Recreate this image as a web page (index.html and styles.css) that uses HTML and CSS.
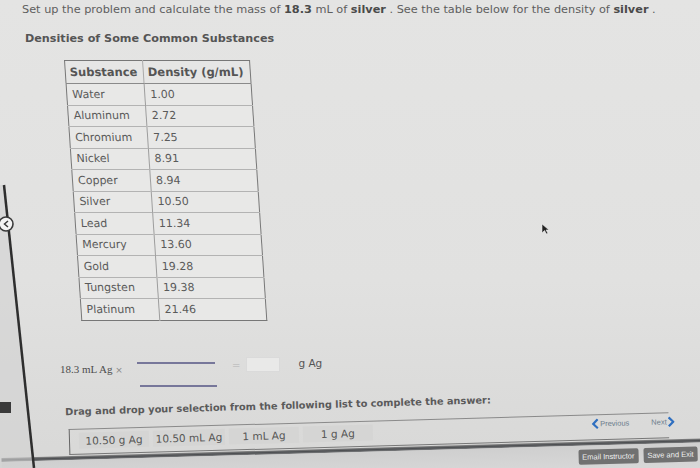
FILE: index.html
```html
<!DOCTYPE html>
<html>
<head>
<meta charset="utf-8">
<link rel="stylesheet" href="styles.css">
</head>
<body>
<div class="page">
  <p class="question">Set up the problem and calculate the mass of <b>18.3</b> mL of <b>silver</b> . See the table below for the density of <b>silver</b> .</p>
  <h2 class="heading">Densities of Some Common Substances</h2>
  <div class="table-wrap">
    <table class="density">
      <thead><tr><th class="c1">Substance</th><th class="c2">Density (g/mL)</th></tr></thead>
      <tbody>
        <tr><td>Water</td><td>1.00</td></tr>
        <tr><td>Aluminum</td><td>2.72</td></tr>
        <tr><td>Chromium</td><td>7.25</td></tr>
        <tr><td>Nickel</td><td>8.91</td></tr>
        <tr><td>Copper</td><td>8.94</td></tr>
        <tr><td>Silver</td><td>10.50</td></tr>
        <tr><td>Lead</td><td>11.34</td></tr>
        <tr><td>Mercury</td><td>13.60</td></tr>
        <tr><td>Gold</td><td>19.28</td></tr>
        <tr><td>Tungsten</td><td>19.38</td></tr>
        <tr><td>Platinum</td><td>21.46</td></tr>
      </tbody>
    </table>
  </div>

  <div class="equation">
    <span class="eq-label">18.3 mL Ag <span class="times">×</span></span>
    <div class="fraction">
      <div class="slot top"></div>
      <div class="slot bottom"></div>
    </div>
    <span class="equals">=</span>
    <span class="answer-box"></span>
    <span class="unit">g Ag</span>
  </div>

  <div class="lower">
    <div class="drag-title">Drag and drop your selection from the following list to complete the answer:</div>
    <div class="drag-box">
      <div class="tiles">
        <span class="tile t1">10.50 g Ag</span>
        <span class="tile t2">10.50 mL Ag</span>
        <span class="tile t3">1 mL Ag</span>
        <span class="tile t4">1 g Ag</span>
      </div>
      <div class="nav">
        <span class="prev"><svg class="chev" width="7" height="11" viewBox="0 0 7 11"><path d="M6 1 L1.5 5.5 L6 10" fill="none" stroke="#2f6fc0" stroke-width="2.2"/></svg>Previous</span>
        <span class="next">Next<svg class="chev" width="7" height="11" viewBox="0 0 7 11"><path d="M1 1 L5.5 5.5 L1 10" fill="none" stroke="#2f6fc0" stroke-width="2.2"/></svg></span>
      </div>
    </div>
    <div class="band"></div>
    <div class="footer">
      <span class="btn">Email Instructor</span>
      <span class="btn">Save and Exit</span>
    </div>
  </div>
</div>

<svg class="edge" width="40" height="468" viewBox="0 0 40 468">
  <path d="M0 185 L4 185 L34 468 L0 468 Z" fill="#d2d2d2" opacity="0.6"/>
  <line x1="4" y1="185" x2="34" y2="468" stroke="#2e2e2e" stroke-width="2.5"/>
  <rect x="0" y="402" width="11" height="11" fill="#3a3a3a"/>
  <circle cx="6" cy="224" r="7" fill="#f4f4f4" stroke="#3a3a3a" stroke-width="1.6"/>
  <path d="M8 221 L4.5 224 L8 227" fill="none" stroke="#3a3a3a" stroke-width="1.5"/>
</svg>
<svg class="cursor" width="9" height="12" viewBox="0 0 9 12">
  <path d="M1 1 L1 10 L3.5 7.5 L5.5 11 L7 10.3 L5 7 L8 7 Z" fill="#222" stroke="#eee" stroke-width="0.6"/>
</svg>
</body>
</html>
```
FILE: styles.css
```css
html, body {
  margin: 0;
  padding: 0;
}
body {
  width: 700px;
  height: 468px;
  overflow: hidden;
  position: relative;
  background: linear-gradient(to bottom, #e4e4e3 0%, #e1e1e0 60%, #d8d8d7 100%);
  font-family: "DejaVu Sans", Verdana, sans-serif;
  color: #5d5d5d;
}
.page {
  padding-top: 2px;
}
.question {
  margin: 0 0 0 22px;
  font-size: 11.3px;
  line-height: 16px;
  white-space: nowrap;
  color: #5e5e5e;
}
.question b {
  color: #4a4a4a;
}
.heading {
  margin: 13px 0 0 25px;
  font-size: 11.2px;
  line-height: 16px;
  font-weight: bold;
  color: #555;
}
.table-wrap {
  margin: 13px 0 0 64px;
  transform: skewX(3.8deg);
  transform-origin: top left;
  width: 188px;
}
.density {
  border-collapse: collapse;
  border: 1.5px solid #777;
  font-size: 11px;
  color: #5a5a5a;
  background: #e8e8e7;
}
.density th {
  height: 22px;
  text-align: left;
  font-weight: bold;
  font-size: 11.5px;
  color: #555;
  padding: 0 4px;
  border-bottom: 1.5px solid #8a8a8a;
  background: #e6e6e5;
}
.density th.c1 { width: 69px; border-right: 1px solid #aaa; }
.density th.c2 { width: 98px; }
.density td {
  height: 20.5px;
  padding: 0 4px 0 5px;
  border-top: 1px solid #b3b3b3;
}
.density td:first-child {
  border-right: 1px solid #9d9d9d;
}
.equation {
  display: flex;
  align-items: center;
  margin: 30px 0 0 60px;
  height: 36px;
}
.eq-label {
  font-family: "Liberation Serif", "Times New Roman", serif;
  font-size: 11px;
  color: #4d4d4d;
  width: 77px;
}
.times {
  color: #888;
  font-family: "DejaVu Sans", sans-serif;
  font-size: 9px;
}
.fraction {
  display: flex;
  flex-direction: column;
  width: 80px;
}
.slot {
  height: 2px;
  background: #77779a;
}
.slot.top {
  width: 78px;
  margin-top: 11px;
}
.slot.bottom {
  width: 77px;
  margin-top: 21px;
  margin-left: 3px;
}
.equals {
  color: #c4c4c4;
  font-size: 10px;
  margin: -6px 0 0 15px;
}
.answer-box {
  width: 32px;
  height: 13px;
  margin: -8px 0 0 6px;
  border: 1px solid #dadada;
  background: #e9e9e8;
}
.unit {
  font-size: 10.5px;
  color: #555;
  margin: -11px 0 0 18px;
}
.lower {
  margin-top: 19px;
  transform: rotate(-1.6deg);
  transform-origin: 0 0;
}
.drag-title {
  margin-left: 65px;
  font-size: 9.8px;
  line-height: 16px;
  font-weight: bold;
  color: #5a5a5a;
  white-space: nowrap;
}
.drag-box {
  display: flex;
  align-items: flex-start;
  justify-content: space-between;
  margin: 9px 0 0 68px;
  width: 600px;
  height: 26px;
  border-top: 1px solid #8a8a8a;
  border-left: 1.5px solid #666;
  border-bottom: 1px solid #777;
  box-sizing: border-box;
}
.tiles {
  display: flex;
  gap: 4px;
  padding: 3px 0 0 9px;
}
.tile {
  display: inline-block;
  height: 16px;
  line-height: 16px;
  font-size: 10.5px;
  color: #555;
  background: #d5d5d4;
  text-align: center;
  white-space: nowrap;
}
.t1 { width: 70px; }
.t2 { width: 72px; }
.t3 { width: 70px; }
.t4 { width: 70px; }
.nav {
  display: flex;
  gap: 22px;
  margin: 3px -6px 0 0;
  font-family: "Liberation Sans", Arial, sans-serif;
  font-size: 7.5px;
  color: #6c7c8c;
}
.nav span {
  display: flex;
  align-items: center;
  gap: 1px;
}
.band {
  margin-top: 1px;
  height: 4px;
  background: linear-gradient(to bottom, #8a8a8a, #4d4f52, #7d7e80);
}
.footer {
  display: flex;
  justify-content: flex-end;
  gap: 5px;
  padding: 4px 4px 0 0;
  height: 24px;
  background: linear-gradient(to bottom, #cfcfcf, #d9d9d9);
}
.btn {
  display: inline-block;
  height: 15px;
  line-height: 15px;
  padding: 0 4px;
  border-radius: 2px;
  background: #717171;
  color: #f0f0f0;
  font-family: "Liberation Sans", Arial, sans-serif;
  font-size: 7.5px;
}
.edge {
  position: absolute;
  left: 0;
  top: 0;
}
.cursor {
  position: absolute;
  left: 541px;
  top: 223px;
}
```
